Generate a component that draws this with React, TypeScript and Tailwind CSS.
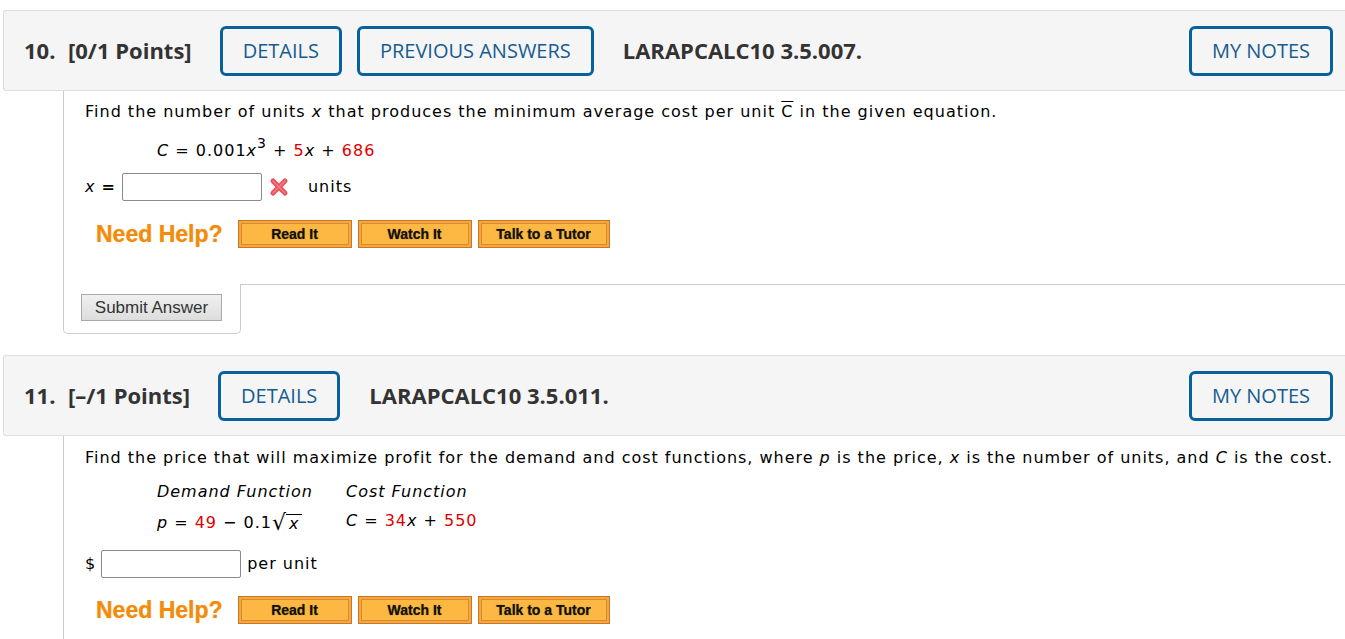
import React from 'react';

const body = { fontFamily: '"DejaVu Sans", Verdana, sans-serif' };
const head = { fontFamily: '"Open Sans", "Liberation Sans", sans-serif' };
const arial = { fontFamily: '"Liberation Sans", Arial, sans-serif' };

function Red({ children }: { children: React.ReactNode }) {
  return <span className="text-[#e00000]">{children}</span>;
}

function HeadButton({ label }: { label: string }) {
  return (
    <div className="h-[50px] px-[20px] flex items-center border-[3px] border-[#07629c] rounded-[6px] text-[20px] text-[#165c8e]">
      {label}
    </div>
  );
}

function Header({ num, points, prev, code }: { num: string; points: string; prev?: boolean; code: string }) {
  return (
    <div
      style={head}
      className="ml-[3px] h-[81px] flex items-center bg-[#f5f5f5] border border-r-0 border-[#dddddd] rounded-l-[3px] text-[#333]"
    >
      <span className="ml-[20px] text-[22px] font-bold w-[32px]">{num}</span>
      <span className="ml-[12px] text-[22px] font-bold">{points}</span>
      <div className="ml-[28px] flex gap-[15px]">
        <HeadButton label="DETAILS" />
        {prev && <HeadButton label="PREVIOUS ANSWERS" />}
      </div>
      <span className="ml-[29px] text-[22px] font-bold">{code}</span>
      <div className="ml-auto mr-[12px]">
        <HeadButton label="MY NOTES" />
      </div>
    </div>
  );
}

function HelpButton({ label, w }: { label: string; w: string }) {
  return (
    <div
      style={arial}
      className={`${w} h-[28px] p-[2px] bg-[#f7a53c] border border-[#c4782a]`}
    >
      <div className="h-full flex items-center justify-center bg-[#fdb843] border border-[#d98c2e] text-[14px] font-bold text-[#111] [text-shadow:0_0_1px_#7a5a10]">
        {label}
      </div>
    </div>
  );
}

function NeedHelp() {
  return (
    <div className="flex items-center ml-[11px] tracking-normal">
      <span style={arial} className="text-[23px] font-bold text-[#f28c0f] [text-shadow:0_0_1px_#f7b060]">
        Need Help?
      </span>
      <div className="ml-[15px] flex gap-[6px]">
        <HelpButton label="Read It" w="w-[114px]" />
        <HelpButton label="Watch It" w="w-[114px]" />
        <HelpButton label="Talk to a Tutor" w="w-[132px]" />
      </div>
    </div>
  );
}

function WrongMark() {
  return (
    <svg width="22" height="22" viewBox="0 0 22 22" className="ml-[6px]">
      <path d="M5 5 L17 17 M17 5 L5 17" stroke="#e9505a" strokeWidth="5" strokeLinecap="round" />
      <path d="M5 5 L17 17 M17 5 L5 17" stroke="#f27d85" strokeWidth="1.5" strokeLinecap="round" />
    </svg>
  );
}

function Input({ w }: { w: string }) {
  return <div className={`${w} h-[28px] border border-[#8a8a8a] bg-white rounded-[2px]`} />;
}

export default function App() {
  return (
    <div className="w-[1345px] h-[639px] overflow-hidden bg-white pt-[10px]">
      <Header num="10." points="[0/1 Points]" prev code="LARAPCALC10 3.5.007." />
      <div className="ml-[63px]" style={body}>
        <div className="border-l border-[#cccccc] pl-[21px] pt-[9px] text-[16px] tracking-[1px] text-black leading-[24px]">
          <p>
            Find the number of units <i>x</i> that produces the minimum average cost per unit{' '}
            <span className="overline">C</span> in the given equation.
          </p>
          <p className="mt-[15px] ml-[72px]">
            <i>C</i> = 0.001<i>x</i>
            <span className="text-[14px] relative -top-[8px]">3</span> + <Red>5</Red>
            <i>x</i> + <Red>686</Red>
          </p>
          <div className="mt-[10px] flex items-center">
            <span>
              <i>x</i> <b>=</b>
            </span>
            <div className="ml-[6px]">
              <Input w="w-[140px]" />
            </div>
            <WrongMark />
            <span className="ml-[18px]">units</span>
          </div>
          <div className="mt-[19px]">
            <NeedHelp />
          </div>
          <div className="h-[36px]" />
        </div>
        <div className="flex">
          <div className="w-[178px] h-[50px] border-l border-r border-b border-[#cccccc] rounded-b-[5px] pl-[17px] pt-[10px]">
            <div
              style={arial}
              className="w-[141px] h-[27px] flex items-center justify-center bg-gradient-to-b from-[#f0f0f0] to-[#dddddd] border border-[#aaaaaa] text-[17px] text-[#333]"
            >
              Submit Answer
            </div>
          </div>
          <div className="flex-1 border-t border-[#cccccc]" />
        </div>
      </div>

      <div className="mt-[21px]">
        <Header num="11." points="[–/1 Points]" code="LARAPCALC10 3.5.011." />
      </div>
      <div className="ml-[63px]" style={body}>
        <div className="border-l border-[#cccccc] pl-[21px] pt-[10px] text-[16px] tracking-[0.98px] text-black leading-[24px] h-[220px]">
          <p className="whitespace-nowrap">
            Find the price that will maximize profit for the demand and cost functions, where <i>p</i> is the
            price, <i>x</i> is the number of units, and <i>C</i> is the cost.
          </p>
          <div className="ml-[72px] mt-[10px] grid grid-cols-[189px_auto]">
            <i>Demand Function</i>
            <i>Cost Function</i>
            <span className="mt-[5px]">
              <i>p</i> = <Red>49</Red> − 0.1
              <span className="text-[22px] tracking-normal relative top-[2px]">√</span>
              <span className="border-t border-black pl-[3px] pr-[3px] leading-[18px] inline-block relative top-[1px]">
                <i>x</i>
              </span>
            </span>
            <span className="mt-[5px]">
              <i>C</i> = <Red>34</Red>
              <i>x</i> + <Red>550</Red>
            </span>
          </div>
          <div className="mt-[15px] flex items-center">
            <span>$</span>
            <div className="ml-[5px]">
              <Input w="w-[140px]" />
            </div>
            <span className="ml-[6px]">per unit</span>
          </div>
          <div className="mt-[18px]">
            <NeedHelp />
          </div>
        </div>
      </div>
    </div>
  );
}
